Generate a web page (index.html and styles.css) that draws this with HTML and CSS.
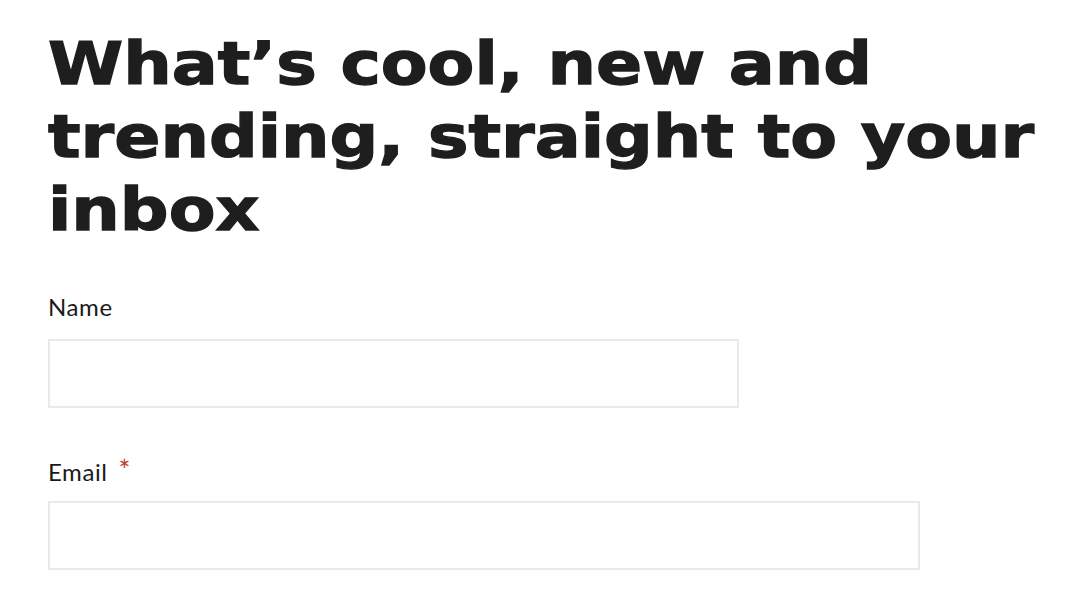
FILE: index.html
```html
<!DOCTYPE html>
<html lang="en">
<head>
<meta charset="utf-8">
<title>Newsletter</title>
<link rel="stylesheet" href="styles.css">
</head>
<body>
<main class="page">
  <h1 class="headline">What’s cool, new and trending, straight to your inbox</h1>
  <form class="form">
    <div class="field">
      <label class="label" for="name">Name</label>
      <input class="input input-name" id="name" type="text">
    </div>
    <div class="field field-email">
      <label class="label" for="email">Email <span class="req">*</span></label>
      <input class="input input-email" id="email" type="email">
    </div>
  </form>
</main>
</body>
</html>
```
FILE: styles.css
```css
html, body {
  margin: 0;
  padding: 0;
  background: #ffffff;
}
.page {
  padding: 27px 0 0 48px;
  width: 1000px;
}
.headline {
  margin: 0;
  width: 880px;
  font-family: "DejaVu Sans", "Liberation Sans", sans-serif;
  font-weight: 700;
  font-size: 59px;
  line-height: 73px;
  color: #1e1e1e;
  -webkit-text-stroke: 1.3px #1e1e1e;
  transform: scaleX(1.155);
  transform-origin: left top;
}
.form {
  display: flex;
  flex-direction: column;
  margin-top: 46px;
}
.field {
  display: flex;
  flex-direction: column;
  align-items: flex-start;
}
.field-email {
  margin-top: 49px;
}
.label {
  font-family: Lato, "Liberation Sans", sans-serif;
  font-size: 24px;
  line-height: 30px;
  letter-spacing: 0.6px;
  color: #1a1a1a;
  margin-bottom: 17px;
}
.field-email .label {
  margin-bottom: 14px;
}
.req {
  color: #c0392b;
  font-size: 28px;
  line-height: 0;
  margin-left: 4px;
}
.input {
  box-sizing: border-box;
  height: 69px;
  border: 2px solid #e9e9e9;
  background: #fff;
  margin: 0;
  padding: 0 16px;
  font-size: 18px;
}
.input-name {
  width: 691px;
}
.input-email {
  width: 872px;
}
```
